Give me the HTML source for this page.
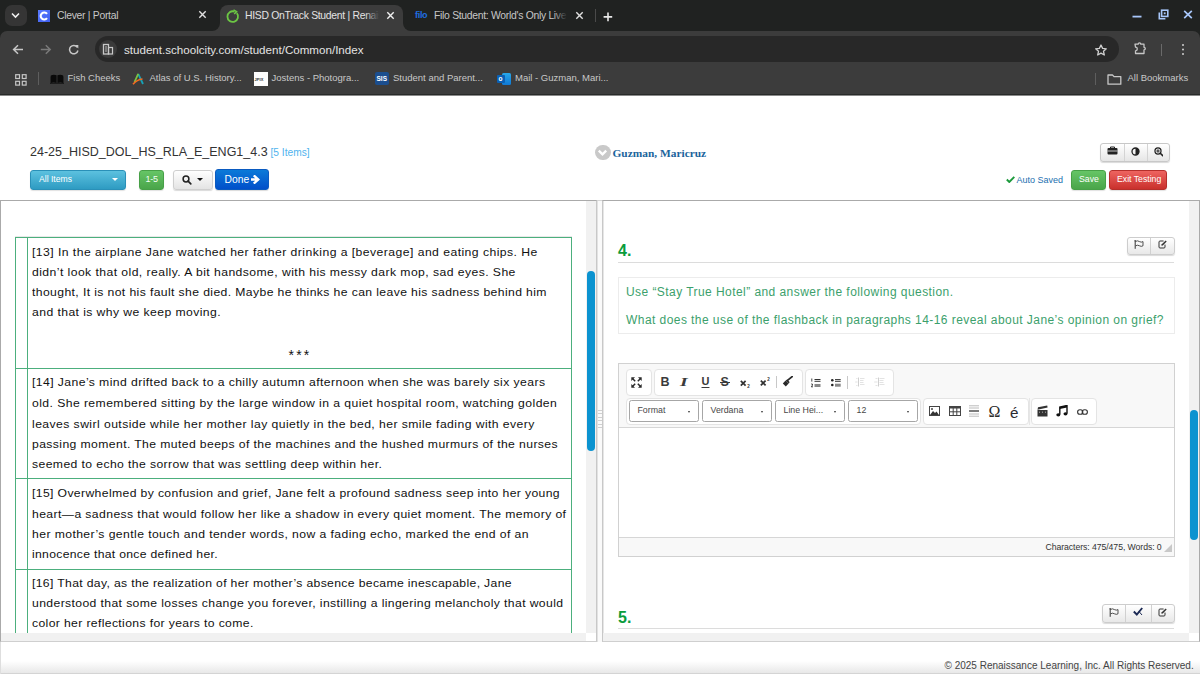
<!DOCTYPE html>
<html><head><meta charset="utf-8">
<style>
*{box-sizing:border-box;margin:0;padding:0}
html,body{width:1200px;height:674px;overflow:hidden;background:#fff;font-family:"Liberation Sans",sans-serif}
.a{position:absolute}
.nw{white-space:nowrap}
#chrome{position:absolute;left:0;top:0;width:1200px;height:96px;background:#202221}
#toolbar{position:absolute;left:0;top:31px;width:1200px;height:63px;background:#3c3c3c;border-radius:7px 7px 0 0}
.tt{position:absolute;font-size:10.4px;color:#c7c7c7;white-space:nowrap;top:10px;letter-spacing:-0.3px}
.bm{position:absolute;font-size:9.5px;color:#c8c8c8;white-space:nowrap;top:72.4px}
.btn{position:absolute;border-radius:3px;color:#fff;font-size:10px;white-space:nowrap;text-align:center}
.grp{position:absolute;background:#fff;border:1px solid #e4e4e4;border-radius:4px}
.combo{position:absolute;background:#fff;border:1px solid #a6a6a6;border-radius:2.5px}
.ptext{position:absolute;transform-origin:0 0;font-size:11.5px;color:#111;white-space:nowrap;left:32px}
</style></head>
<body>
<div id="chrome">
  <div class="a" style="left:5px;top:5px;width:22px;height:21px;border-radius:7px;background:#353535"></div>
  <svg class="a" style="left:11px;top:12px" width="9" height="7" viewBox="0 0 9 7"><path d="M1 1.5 L4.5 5 L8 1.5" fill="none" stroke="#f0f0f0" stroke-width="1.6"/></svg>
  <div class="a" style="left:38px;top:10px;width:12px;height:12px;background:linear-gradient(135deg,#5a7bff,#3f5ff0)"></div>
  <svg class="a" style="left:38px;top:10px" width="12" height="12" viewBox="0 0 12 12"><path d="M9 3.9 A3.5 3.5 0 1 0 9 8.1" fill="none" stroke="#fff" stroke-width="2.1"/></svg>
  <svg class="a" style="left:197.7px;top:10.4px" width="9" height="9" viewBox="0 0 9 9"><path d="M1.3 1.3 L7.7 7.7 M7.7 1.3 L1.3 7.7" stroke="#e0e0e0" stroke-width="1.4"/></svg>
  <!-- active tab -->
  <div class="a" style="left:211px;top:23px;width:10px;height:9px;background:#3c3c3c"></div>
  <div class="a" style="left:211px;top:21px;width:9px;height:10px;background:#202221;border-radius:0 0 8px 0"></div>
  <div class="a" style="left:402px;top:23px;width:10px;height:9px;background:#3c3c3c"></div>
  <div class="a" style="left:403px;top:21px;width:9px;height:10px;background:#202221;border-radius:0 0 0 8px"></div>
  <div class="a" style="left:220px;top:5px;width:183px;height:27px;background:#3c3c3c;border-radius:8px 8px 0 0"></div>
  <svg class="a" style="left:225px;top:9px" width="15" height="15" viewBox="0 0 15 15"><path d="M11.8 4.2 A5.3 5.3 0 1 1 9.5 2.6" fill="none" stroke="#6cc644" stroke-width="1.8"/><path d="M8.5 0.8 L11.6 2.6 L9.2 5" fill="none" stroke="#6cc644" stroke-width="1.5"/></svg>
  <svg class="a" style="left:385.8px;top:10.7px" width="9" height="9" viewBox="0 0 9 9"><path d="M1.3 1.3 L7.7 7.7 M7.7 1.3 L1.3 7.7" stroke="#f0f0f0" stroke-width="1.4"/></svg>
  <div class="a nw" style="left:415px;top:10px;font-size:9px;font-weight:bold;color:#1f6fe0;letter-spacing:-0.3px">f<span style="color:#1f6fe0">i</span>lo</div>
  <svg class="a" style="left:574.7px;top:10.5px" width="9" height="9" viewBox="0 0 9 9"><path d="M1.3 1.3 L7.7 7.7 M7.7 1.3 L1.3 7.7" stroke="#e0e0e0" stroke-width="1.4"/></svg>
  <div class="a" style="left:594.5px;top:9px;width:1.5px;height:12.5px;background:#4a4a4a"></div>
  <svg class="a" style="left:602.5px;top:11.5px" width="10" height="10" viewBox="0 0 10 10"><path d="M5 0.6 V9.2 M0.6 4.9 H9.2" stroke="#e8e8e8" stroke-width="1.6"/></svg>
  <svg class="a" style="left:1132px;top:15px" width="10" height="3" viewBox="0 0 10 3"><path d="M0.5 1.6 H9.5" stroke="#a8c7fa" stroke-width="1.8"/></svg>
  <svg class="a" style="left:1157.5px;top:8.5px" width="11" height="11" viewBox="0 0 11 11"><path d="M1.3 3.6 V9.7 H7.4" fill="none" stroke="#a8c7fa" stroke-width="1.6"/><rect x="3.6" y="1.2" width="6.2" height="6.2" fill="none" stroke="#a8c7fa" stroke-width="1.6"/><rect x="5.8" y="3.4" width="1.8" height="1.8" fill="#a8c7fa"/></svg>
  <svg class="a" style="left:1183px;top:9.5px" width="10" height="9" viewBox="0 0 10 9"><path d="M1.2 0.8 L8.8 8.2 M8.8 0.8 L1.2 8.2" stroke="#a8c7fa" stroke-width="1.7"/></svg>
  <div id="toolbar">
    <div class="a" style="left:95px;top:5px;width:1024px;height:26px;border-radius:13px;background:#282828"></div>
    <div class="a" style="left:99px;top:9px;width:18px;height:18px;border-radius:9px;background:#3a3a3a"></div>
    <svg class="a" style="left:102px;top:12px" width="12" height="12" viewBox="0 0 12 12"><rect x="1.5" y="1.5" width="5" height="9.5" fill="none" stroke="#c8c8c8" stroke-width="1.3"/><rect x="6.5" y="4.5" width="4" height="6.5" fill="none" stroke="#c8c8c8" stroke-width="1.2"/><path d="M3 4 H5 M3 6 H5 M3 8 H5" stroke="#c8c8c8" stroke-width="0.9"/></svg>
    <div id="url" class="a nw" style="left:124px;top:11.5px;font-size:11.6px;color:#e3e3e3">student.schoolcity.com/student/Common/Index</div>
    <svg class="a" style="left:12px;top:12.5px" width="12" height="11" viewBox="0 0 12 11"><path d="M11 5.5 H1.8 M6 1.2 L1.6 5.5 L6 9.8" fill="none" stroke="#c7c7c7" stroke-width="1.5"/></svg>
    <svg class="a" style="left:40px;top:12.5px" width="12" height="11" viewBox="0 0 12 11"><path d="M0.8 5.5 H10 M5.8 1.2 L10.2 5.5 L5.8 9.8" fill="none" stroke="#7a7a7a" stroke-width="1.5"/></svg>
    <svg class="a" style="left:68px;top:12.5px" width="12" height="11" viewBox="0 0 12 11"><path d="M9.3 3.3 A4.2 4.2 0 1 0 9.9 6.5" fill="none" stroke="#c7c7c7" stroke-width="1.5"/><path d="M6.8 1 H10.3 V4.5 Z" fill="#c7c7c7"/></svg>
    <svg class="a" style="left:1094px;top:12.5px" width="14" height="12" viewBox="0 0 14 12"><path d="M7 1 L8.6 4.4 L12.3 4.8 L9.5 7.3 L10.3 11 L7 9.1 L3.7 11 L4.5 7.3 L1.7 4.8 L5.4 4.4 Z" fill="none" stroke="#d0d0d0" stroke-width="1.3" stroke-linejoin="round"/></svg>
    <svg class="a" style="left:1133px;top:10px" width="15" height="15" viewBox="0 0 15 15"><path d="M2 3.2 H5.2 A1.3 1.3 0 0 1 7.8 3.2 H11 V6.3 A1.3 1.3 0 0 1 11 8.9 V12.5 H2.5 V9.8 A1.6 1.6 0 0 0 2.5 6.2 Z" fill="none" stroke="#c7c7c7" stroke-width="1.3" stroke-linejoin="round"/></svg>
    <div class="a" style="left:1160.5px;top:13px;width:1px;height:12px;background:#6a6a6a"></div>
    <div class="a" style="left:1181.5px;top:13px;width:2px;height:2px;border-radius:1px;background:#d0d0d0;box-shadow:0 4.5px 0 #d0d0d0,0 9px 0 #d0d0d0"></div>
    <!-- bookmarks -->
    <svg class="a" style="left:14.5px;top:42.5px" width="12" height="12" viewBox="0 0 12 12"><rect x="0.7" y="0.7" width="3.8" height="3.8" fill="none" stroke="#c7c7c7" stroke-width="1.2"/><rect x="7.3" y="0.7" width="3.8" height="3.8" fill="none" stroke="#c7c7c7" stroke-width="1.2"/><rect x="0.7" y="7.3" width="3.8" height="3.8" fill="none" stroke="#c7c7c7" stroke-width="1.2"/><rect x="7.3" y="7.3" width="3.8" height="3.8" fill="none" stroke="#c7c7c7" stroke-width="1.2"/></svg>
    <div class="a" style="left:38px;top:41px;width:1px;height:13px;background:#5e5e5e"></div>
    <svg class="a" style="left:50px;top:42.5px" width="14" height="10" viewBox="0 0 14 10"><path d="M0.8 1.5 Q3.5 0 6.6 1.2 V9 Q3.5 8 0.8 9 Z M7.4 1.2 Q10.5 0 13.2 1.5 V9 Q10.5 8 7.4 9 Z" fill="#0a0a0a"/><path d="M0 2.5 V9.6 H14 V2.5" fill="none" stroke="#111" stroke-width="0.8"/></svg>
    <svg class="a" style="left:132px;top:42px" width="12" height="12" viewBox="0 0 12 12"><path d="M6.2 0.8 L11 11" stroke="#16a3b8" stroke-width="1.8"/><path d="M6.2 0.8 L2.5 9" stroke="#7cc242" stroke-width="1.8"/><path d="M1 11.2 Q5 6.5 10.5 6" fill="none" stroke="#f26b21" stroke-width="1.6"/></svg>
    <div class="a" style="left:254px;top:41px;width:13.5px;height:13.5px;background:#fdfdfd"></div>
    <div class="a nw" style="left:254.5px;top:45.5px;font-size:4px;color:#333;font-weight:bold;letter-spacing:0.1px">JPIX</div>
    <div class="a" style="left:375px;top:41px;width:13.5px;height:13px;border-radius:2px;background:#1b4e8f"></div>
    <div class="a nw" style="left:376.5px;top:43.5px;font-size:6.5px;color:#fff;font-weight:bold">SIS</div>
    <div class="a" style="left:502px;top:41.5px;width:8.5px;height:12px;border-radius:1.5px;background:linear-gradient(#28a8ea,#0f78d4)"></div>
    <div class="a" style="left:497px;top:43.5px;width:8px;height:8px;border-radius:1px;background:#0a5fb4"></div>
    <div class="a nw" style="left:498.5px;top:44px;font-size:6.5px;color:#fff;font-weight:bold">o</div>
    <div class="a" style="left:1094.5px;top:41.5px;width:1px;height:12px;background:#5e5e5e"></div>
    <svg class="a" style="left:1107px;top:43px" width="15" height="11" viewBox="0 0 15 11"><path d="M1 1 H5.5 L7 2.6 H13.8 V10.2 H1 Z" fill="none" stroke="#c7c7c7" stroke-width="1.3" stroke-linejoin="round"/></svg>
  </div>
  <div class="a" style="left:0;top:94px;width:1200px;height:1px;background:#282a29"></div>
  <div class="a" style="left:0;top:95px;width:1200px;height:1px;background:#8a8a8a"></div>
  <div class="tt" style="left:57px">Clever | Portal</div>
  <div class="tt" style="left:245px;color:#e3e3e3;width:134px;overflow:hidden">HISD OnTrack Student | Renaissance</div>
  <div class="tt" style="left:434px;width:133px;overflow:hidden">Filo Student: World's Only Live Tutoring</div>
  <div class="a" style="left:365px;top:7px;width:15px;height:20px;background:linear-gradient(90deg,rgba(60,60,60,0),#3c3c3c 95%)"></div>
  <div class="a" style="left:553px;top:7px;width:15px;height:20px;background:linear-gradient(90deg,rgba(32,34,33,0),#202221 95%)"></div>
  <div class="bm" style="left:67.5px">Fish Cheeks</div>
  <div class="bm" style="left:149.5px">Atlas of U.S. History...</div>
  <div class="bm" style="left:271.5px">Jostens - Photogra...</div>
  <div class="bm" style="left:393px">Student and Parent...</div>
  <div class="bm" style="left:515px">Mail - Guzman, Mari...</div>
  <div class="bm" style="left:1127.5px">All Bookmarks</div>
</div>

<!-- header -->
<div id="ttl" class="a nw" style="left:30px;top:145px;font-size:12.5px;color:#333">24-25_HISD_DOL_HS_RLA_E_ENG1_4.3</div>
<div id="ttl2" class="a nw" style="left:270.5px;top:147.3px;font-size:10.2px;color:#4fb3ee">[5 Items]</div>
<div class="btn" style="left:30px;top:170px;width:96px;height:20px;background:linear-gradient(#5cc1df,#2e9bc2);border:1px solid #2a90b8;box-shadow:0 1px 1px rgba(0,0,0,.12)"></div>
<div id="allit" class="a nw" style="left:39px;top:174.2px;font-size:8.6px;color:#fff">All Items</div>
<div class="a" style="left:111.5px;top:178px;width:0;height:0;border-left:3px solid transparent;border-right:3px solid transparent;border-top:3px solid #fff"></div>
<div class="btn" style="left:139px;top:170px;width:25px;height:19.5px;background:linear-gradient(#66c566,#4aa54a);border:1px solid #47a047;box-shadow:0 1px 1px rgba(0,0,0,.12)"></div>
<div id="b15" class="a nw" style="left:145.5px;top:174px;font-size:9px;color:#f4fff4;letter-spacing:-0.2px">1-5</div>
<div class="btn" style="left:173px;top:170px;width:40px;height:20px;background:linear-gradient(#fff,#e4e4e4);border:1px solid #cfcfcf;box-shadow:0 1px 1px rgba(0,0,0,.15)"></div>
<svg class="a" style="left:182px;top:174.5px" width="10" height="10" viewBox="0 0 10 10"><circle cx="4" cy="4" r="2.9" fill="none" stroke="#222" stroke-width="1.5"/><path d="M6.1 6.1 L8.8 8.8" stroke="#222" stroke-width="1.7" stroke-linecap="round"/></svg>
<div class="a" style="left:197px;top:178px;width:0;height:0;border-left:3px solid transparent;border-right:3px solid transparent;border-top:3px solid #111"></div>
<div class="btn" style="left:215px;top:169px;width:54px;height:21px;background:linear-gradient(#0b7ad8,#004fca);border:1px solid #0a5ac0;box-shadow:0 1px 1px rgba(0,0,0,.15)"></div>
<div id="done" class="a nw" style="left:224.5px;top:174.3px;font-size:10.3px;color:#fff">Done</div>
<svg class="a" style="left:250.5px;top:175px" width="9" height="9" viewBox="0 0 9 9"><path d="M0.6 4.5 H6.8 M3.6 1.2 L7.3 4.5 L3.6 7.8" fill="none" stroke="#fff" stroke-width="2.3" stroke-linejoin="miter" stroke-linecap="square"/></svg>

<div class="a" style="left:595px;top:144.5px;width:15.5px;height:15.5px;border-radius:8px;background:#c9c9c9"></div>
<svg class="a" style="left:597px;top:147px" width="11" height="11" viewBox="0 0 11 11"><path d="M1.8 3.6 L5.5 7.3 L9.2 3.6" fill="none" stroke="#fff" stroke-width="2.3"/></svg>
<div id="guz" class="a nw" style="left:612.5px;top:146.5px;font-family:'Liberation Serif',serif;font-weight:bold;font-size:11.4px;color:#1b649c">Guzman, Maricruz</div>

<div class="btn" style="left:1100px;top:143px;width:70px;height:19px;background:linear-gradient(#fff,#e6e6e6);border:1px solid #c8c8c8;box-shadow:0 1px 1px rgba(0,0,0,.15)"></div>
<div class="a" style="left:1123.5px;top:144px;width:1px;height:17px;background:#d4d4d4"></div>
<div class="a" style="left:1146.5px;top:144px;width:1px;height:17px;background:#d4d4d4"></div>
<svg class="a" style="left:1107px;top:146px" width="11" height="10" viewBox="0 0 11 10"><path d="M3.5 2 V1 H7.5 V2" fill="none" stroke="#222" stroke-width="1"/><rect x="0.5" y="2" width="10" height="6.5" rx="1" fill="#222"/><rect x="0.5" y="4.6" width="10" height="0.8" fill="#eee"/></svg>
<svg class="a" style="left:1130.5px;top:147px" width="9" height="9" viewBox="0 0 9 9"><circle cx="4.5" cy="4.5" r="3.5" fill="none" stroke="#222" stroke-width="1.3"/><path d="M4.5 1 A3.5 3.5 0 0 1 4.5 8 Z" fill="#222"/></svg>
<svg class="a" style="left:1153.5px;top:147px" width="9.5" height="9.5" viewBox="0 0 10 10"><circle cx="4.2" cy="4.2" r="3.2" fill="none" stroke="#222" stroke-width="1.3"/><path d="M4.2 2.4 V6 M2.4 4.2 H6" stroke="#222" stroke-width="1.1"/><path d="M6.6 6.6 L9.2 9.2" stroke="#222" stroke-width="1.7" stroke-linecap="round"/></svg>

<svg class="a" style="left:1005.5px;top:176px" width="9" height="7" viewBox="0 0 9 7"><path d="M0.8 3.5 L3.3 6 L8.3 0.9" fill="none" stroke="#1c9a3c" stroke-width="1.9"/></svg>
<div id="autos" class="a nw" style="left:1016.5px;top:175px;font-size:9px;color:#2370b0">Auto Saved</div>
<div class="btn" style="left:1071px;top:170px;width:35px;height:19.5px;background:linear-gradient(#66c566,#4aa54a);border:1px solid #47a047;box-shadow:0 1px 1px rgba(0,0,0,.12)"></div>
<div id="save" class="a nw" style="left:1079px;top:173.8px;font-size:8.7px;color:#fff">Save</div>
<div class="btn" style="left:1109px;top:170px;width:58px;height:19.5px;background:linear-gradient(#ee6460,#c9302c);border:1px solid #b52f2b;box-shadow:0 1px 1px rgba(0,0,0,.12)"></div>
<div id="exitt" class="a nw" style="left:1117px;top:174px;font-size:8.7px;color:#fff">Exit Testing</div>

<!-- left panel -->
<div class="a" style="left:0;top:200px;width:597px;height:442px;border:1px solid #aaa;border-right-color:#c8c8c8;border-bottom-color:#cfcfcf"></div>
<div class="a" style="left:15px;top:236px;width:557px;height:1px;background:#e8e8e8"></div>
<div class="a" style="left:586px;top:201px;width:10px;height:432px;background:#f1f1f1"></div>
<div class="a" style="left:587px;top:271px;width:8px;height:180px;border-radius:4px;background:#0b93d0"></div>
<div class="a" style="left:1px;top:633px;width:585px;height:8px;background:#f1f1f1"></div>

<!-- passage table -->
<div class="a" style="left:15px;top:237px;width:557px;height:396px;border:1px solid #4caf7d;border-bottom:none"></div>
<div class="a" style="left:27px;top:237px;width:1px;height:396px;background:#4caf7d"></div>
<div class="a" style="left:15px;top:368px;width:557px;height:1px;background:#4caf7d"></div>
<div class="a" style="left:15px;top:478px;width:557px;height:1px;background:#4caf7d"></div>
<div class="a" style="left:15px;top:569px;width:557px;height:1px;background:#4caf7d"></div>

<div class="ptext" style="transform:scaleX(1.060);letter-spacing:0.421px;top:245.8px">[13] In the airplane Jane watched her father drinking a [beverage] and eating chips. He</div>
<div class="ptext" style="transform:scaleX(1.060);letter-spacing:0.406px;top:266.0px">didn’t look that old, really. A bit handsome, with his messy dark mop, sad eyes. She</div>
<div class="ptext" style="transform:scaleX(1.060);letter-spacing:0.361px;top:286.2px">thought, It is not his fault she died. Maybe he thinks he can leave his sadness behind him</div>
<div class="ptext" style="transform:scaleX(1.060);letter-spacing:0.391px;top:306.3px">and that is why we keep moving.</div>
<div id="ast" class="ptext" style="letter-spacing:2.2px;top:346.5px;left:288.5px;font-size:14px">***</div>
<div class="ptext" style="transform:scaleX(1.060);letter-spacing:0.393px;top:376.0px">[14] Jane’s mind drifted back to a chilly autumn afternoon when she was barely six years</div>
<div class="ptext" style="transform:scaleX(1.060);letter-spacing:0.396px;top:397.2px">old. She remembered sitting by the large window in a quiet hospital room, watching golden</div>
<div class="ptext" style="transform:scaleX(1.060);letter-spacing:0.403px;top:417.5px">leaves swirl outside while her mother lay quietly in the bed, her smile fading with every</div>
<div class="ptext" style="transform:scaleX(1.060);letter-spacing:0.370px;top:437.8px">passing moment. The muted beeps of the machines and the hushed murmurs of the nurses</div>
<div class="ptext" style="transform:scaleX(1.060);letter-spacing:0.371px;top:458.3px">seemed to echo the sorrow that was settling deep within her.</div>
<div class="ptext" style="transform:scaleX(1.060);letter-spacing:0.346px;top:487.3px">[15] Overwhelmed by confusion and grief, Jane felt a profound sadness seep into her young</div>
<div class="ptext" style="transform:scaleX(1.060);letter-spacing:0.378px;top:507.7px">heart—a sadness that would follow her like a shadow in every quiet moment. The memory of</div>
<div class="ptext" style="transform:scaleX(1.060);letter-spacing:0.385px;top:527.9px">her mother’s gentle touch and tender words, now a fading echo, marked the end of an</div>
<div class="ptext" style="transform:scaleX(1.060);letter-spacing:0.284px;top:548.1px">innocence that once defined her.</div>
<div class="ptext" style="transform:scaleX(1.060);letter-spacing:0.324px;top:577.0px">[16] That day, as the realization of her mother’s absence became inescapable, Jane</div>
<div class="ptext" style="transform:scaleX(1.060);letter-spacing:0.356px;top:597.2px">understood that some losses change you forever, instilling a lingering melancholy that would</div>
<div class="ptext" style="transform:scaleX(1.060);letter-spacing:0.338px;top:617.4px">color her reflections for years to come.</div>

<!-- splitter -->
<div class="a" style="left:597px;top:200px;width:5px;height:442px;background:#fafafa"></div>
<div class="a" style="left:598px;top:410px;width:4px;height:21px;background:repeating-linear-gradient(#cfcfcf 0 1px,#fafafa 1px 3.5px)"></div>
<div class="a" style="left:597px;top:201px;width:1px;height:441px;background:#e2e2e2"></div>
<div class="a" style="left:597px;top:200px;width:5px;height:1px;background:#d6d6d6"></div>
<div class="a" style="left:603px;top:201px;width:1px;height:432px;background:#e6e6e6"></div>

<!-- right panel -->
<div class="a" style="left:602px;top:200px;width:598px;height:442px;border:1px solid #aaa;border-left-color:#c8c8c8;border-bottom-color:#cfcfcf"></div>
<div class="a" style="left:1189px;top:201px;width:10px;height:432px;background:#f1f1f1"></div>
<div class="a" style="left:1190px;top:410px;width:7.5px;height:130px;border-radius:4px;background:#0b93d0"></div>
<div class="a" style="left:603px;top:633px;width:586px;height:8px;background:#f1f1f1"></div>

<div class="a nw" style="left:618px;top:241.5px;font-size:16px;font-weight:bold;color:#0b9c3c">4.</div>
<div class="a" style="left:618px;top:262px;width:556px;height:1px;background:#dcdcdc"></div>
<div class="btn" style="left:1126.5px;top:237px;width:48px;height:18px;background:linear-gradient(#fff,#e8e8e8);border:1px solid #cdcdcd;box-shadow:0 1px 1px rgba(0,0,0,.15)"></div>
<div class="a" style="left:1150px;top:238px;width:1px;height:16px;background:#d0d0d0"></div>
<svg class="a" style="left:1134px;top:240px" width="10" height="9" viewBox="0 0 10 9"><path d="M1.2 0.6 V8.8" stroke="#333" stroke-width="1"/><path d="M0.4 0.8 H2" stroke="#333" stroke-width="0.9"/><path d="M1.6 1.4 Q3.5 0.2 5.5 1.6 Q7.3 2.7 9 1.6 V5.8 Q7.3 6.9 5.5 5.8 Q3.5 4.6 1.6 5.8" fill="none" stroke="#333" stroke-width="0.85"/></svg>
<svg class="a" style="left:1158px;top:240px" width="9" height="9" viewBox="0 0 9 9"><path d="M5.6 1 H2 Q1 1 1 2 V7 Q1 8 2 8 H6 Q7 8 7 7 V4.6" fill="none" stroke="#333" stroke-width="1"/><path d="M3.4 5.8 L3.7 4.3 L7.7 0.4 L8.7 1.4 L4.8 5.4 Z" fill="#333"/></svg>

<div class="a" style="left:617.5px;top:277px;width:557px;height:57px;border:1px solid #ececec"></div>
<div id="q1" class="a nw" style="left:626px;top:285px;font-size:12px;color:#3c9f6c;letter-spacing:0.44px">Use “Stay True Hotel” and answer the following question.</div>
<div id="q2" class="a nw" style="left:626px;top:313px;font-size:12px;color:#3c9f6c;letter-spacing:0.44px">What does the use of the flashback in paragraphs 14-16 reveal about Jane’s opinion on grief?</div>

<!-- editor -->
<div class="a" style="left:618px;top:363px;width:557px;height:194px;border:1px solid #d1d1d1;background:#f8f8f8"></div>
<div class="a" style="left:619px;top:427px;width:555px;height:111px;background:#fff;border-top:1px solid #d6d6d6;border-bottom:1px solid #d6d6d6"></div>
<div class="grp" style="left:626px;top:369px;width:25.5px;height:26.5px"></div>
<div class="grp" style="left:654px;top:369px;width:149px;height:26.5px"></div>
<div class="grp" style="left:805px;top:369px;width:88.5px;height:26.5px"></div>
<div class="grp" style="left:626px;top:398px;width:294.5px;height:26.5px"></div>
<div class="grp" style="left:923px;top:398px;width:105.5px;height:26.5px"></div>
<div class="grp" style="left:1031px;top:398px;width:65.5px;height:26.5px"></div>
<!-- row1 icons -->
<svg class="a" style="left:631px;top:377px" width="11" height="11" viewBox="0 0 11 11"><g fill="#2a2a2a"><path d="M0.3 0.3 H4 L0.3 4 Z"/><path d="M10.7 0.3 H7 L10.7 4 Z"/><path d="M0.3 10.7 H4 L0.3 7 Z"/><path d="M10.7 10.7 H7 L10.7 7 Z"/></g><path d="M1.5 1.5 L4.2 4.2 M9.5 1.5 L6.8 4.2 M1.5 9.5 L4.2 6.8 M9.5 9.5 L6.8 6.8" stroke="#2a2a2a" stroke-width="1.5"/></svg>
<div class="a nw" style="left:660.5px;top:374.5px;font-size:12.5px;font-weight:bold;color:#3a3a3a">B</div>
<div class="a nw" style="left:680px;top:374px;font-size:13px;font-style:italic;font-family:'Liberation Serif',serif;font-weight:bold;color:#3a3a3a;transform:scaleX(1.5);transform-origin:0 0">I</div>
<div class="a nw" style="left:701.5px;top:375px;font-size:11px;font-weight:bold;color:#3a3a3a;text-decoration:underline;text-underline-offset:1.5px">U</div>
<div class="a nw" style="left:720.5px;top:374.5px;font-size:12.5px;font-weight:bold;color:#3a3a3a">S</div>
<div class="a" style="left:719.5px;top:381.5px;width:10px;height:1.2px;background:#3a3a3a"></div>
<svg class="a" style="left:740px;top:380px" width="11" height="8" viewBox="0 0 11 8"><path d="M0.8 0.8 L5.6 5.6 M5.6 0.8 L0.8 5.6" stroke="#333" stroke-width="1.7"/><text x="7.3" y="7.8" font-size="4.5" font-family="Liberation Sans" font-weight="bold" fill="#333">2</text></svg>
<svg class="a" style="left:760px;top:377px" width="11" height="9" viewBox="0 0 11 9"><path d="M0.8 3.6 L5.6 8.4 M5.6 3.6 L0.8 8.4" stroke="#333" stroke-width="1.7"/><text x="7.3" y="4.2" font-size="4.5" font-family="Liberation Sans" font-weight="bold" fill="#333">2</text></svg>
<div class="a" style="left:776px;top:376px;width:1px;height:12px;background:#c8c8c8"></div>
<svg class="a" style="left:781.5px;top:376px" width="11" height="11" viewBox="0 0 11 11"><path d="M5.2 4.6 L10.2 0.6" stroke="#2a2a2a" stroke-width="1.8" stroke-linecap="round"/><path d="M0.8 7.4 L3.6 4.6 L6.6 7.6 L3.8 10.4 Z" fill="#2a2a2a"/><path d="M3.8 4.4 L5.2 3.6 L7.6 6 L6.8 7.4 Z" fill="#2a2a2a"/></svg>
<svg class="a" style="left:811px;top:377.5px" width="10" height="10" viewBox="0 0 10 10"><path d="M3.5 1.5 H9.5 M3.5 3.3 H9.5" stroke="#333" stroke-width="1"/><rect x="3.5" y="6" width="6" height="3" fill="#888"/><path d="M0.8 0.5 V3.6 M0.2 6 Q1.8 5.5 1.6 7 L0.2 8.8 H2" fill="none" stroke="#333" stroke-width="0.9"/></svg>
<svg class="a" style="left:831px;top:378px" width="10" height="9" viewBox="0 0 10 9"><circle cx="1.3" cy="2.3" r="1.3" fill="#222"/><circle cx="1.3" cy="7" r="1.3" fill="#222"/><path d="M4 1.6 H9.7 M4 3.3 H9.7" stroke="#333" stroke-width="1"/><rect x="4" y="5.7" width="5.7" height="3" fill="#888"/></svg>
<div class="a" style="left:847px;top:376px;width:1px;height:12.5px;background:#c8c8c8"></div>
<svg class="a" style="left:855px;top:377px" width="10" height="10" viewBox="0 0 10 10"><path d="M3.5 0.5 V9.5" stroke="#cfcfcf" stroke-width="1"/><path d="M5 1.5 H9.5 M5 3.5 H8.5 M5 5.5 H8.5 M5 7.5 H9.5 M0.2 5 H2.5 M1.2 1.5 H2.5 M1.2 8.5 H2.5" stroke="#dcdcdc" stroke-width="0.8"/></svg>
<svg class="a" style="left:874px;top:377px" width="11" height="10" viewBox="0 0 11 10"><path d="M4.5 0.5 V9.5" stroke="#cfcfcf" stroke-width="1"/><path d="M5.5 1.5 H10.5 M5.5 3.5 H9.5 M5.5 5.5 H9.5 M5.5 7.5 H10.5 M0.2 5 H3.5 M1.5 1.5 H3.5 M1.5 8.5 H3.5" stroke="#dcdcdc" stroke-width="0.8"/></svg>
<!-- combos -->
<div class="combo" style="left:629px;top:400px;width:70px;height:21.5px"></div>
<div class="combo" style="left:702px;top:400px;width:70px;height:21.5px"></div>
<div class="combo" style="left:775px;top:400px;width:70px;height:21.5px"></div>
<div class="combo" style="left:848px;top:400px;width:70px;height:21.5px"></div>
<div id="cf1" class="a nw" style="left:637.5px;top:404.5px;font-size:8.8px;color:#484848">Format</div>
<div id="cf2" class="a nw" style="left:710.5px;top:404.5px;font-size:8.8px;color:#484848">Verdana</div>
<div id="cf3" class="a nw" style="left:783.5px;top:404.5px;font-size:8.8px;color:#484848">Line Hei...</div>
<div id="cf4" class="a nw" style="left:856.5px;top:404.5px;font-size:8.8px;color:#484848">12</div>
<div class="a" style="left:688px;top:410.5px;width:0;height:0;border-left:1.5px solid transparent;border-right:1.5px solid transparent;border-top:2px solid #333"></div>
<div class="a" style="left:761px;top:410.5px;width:0;height:0;border-left:1.5px solid transparent;border-right:1.5px solid transparent;border-top:2px solid #333"></div>
<div class="a" style="left:834px;top:410.5px;width:0;height:0;border-left:1.5px solid transparent;border-right:1.5px solid transparent;border-top:2px solid #333"></div>
<div class="a" style="left:907px;top:410.5px;width:0;height:0;border-left:1.5px solid transparent;border-right:1.5px solid transparent;border-top:2px solid #333"></div>
<!-- row2 icons -->
<svg class="a" style="left:929px;top:406px" width="11" height="10" viewBox="0 0 11 10"><rect x="0.5" y="0.5" width="10" height="9" fill="none" stroke="#444" stroke-width="1"/><path d="M1 9 L4 5 L6 7 L7.5 5.5 L10 9 Z" fill="#333"/><circle cx="3" cy="3" r="1" fill="#444"/></svg>
<svg class="a" style="left:948.5px;top:406px" width="12" height="10" viewBox="0 0 12 10"><rect x="0.5" y="0.5" width="11" height="9" fill="none" stroke="#444" stroke-width="1"/><rect x="0.5" y="0.5" width="11" height="2" fill="#444"/><path d="M4.2 2 V9.5 M7.8 2 V9.5 M0.5 5.8 H11.5" stroke="#444" stroke-width="1"/></svg>
<svg class="a" style="left:969px;top:405px" width="10" height="12" viewBox="0 0 10 12"><path d="M0 0.8 H10 M0 3 H10 M0 9 H10 M0 11.2 H10" stroke="#bbb" stroke-width="1"/><path d="M0 6 H10" stroke="#444" stroke-width="1.4"/></svg>
<div id="omg" class="a nw" style="left:988.5px;top:403px;font-size:16px;font-family:'Liberation Serif',serif;color:#2a2a2a">Ω</div>
<div id="eac" class="a nw" style="left:1009.5px;top:404.5px;font-size:14.5px;color:#2a2a30;transform:scaleX(1.05);transform-origin:0 0">é</div>
<div class="a" style="left:1029px;top:398px;width:1px;height:27px;background:#e6e6e6"></div>
<svg class="a" style="left:1036.5px;top:405px" width="11" height="12" viewBox="0 0 11 12"><rect x="0.5" y="5" width="10" height="6.5" fill="#333"/><path d="M0.5 4.8 L1 2.2 L10.2 0.4 L10.6 2.6 Z" fill="#333"/><path d="M2.5 6.5 V8 M5.5 6.5 V8 M8.5 6.5 V8" stroke="#888" stroke-width="1"/></svg>
<svg class="a" style="left:1055.5px;top:405px" width="12" height="12" viewBox="0 0 12 12"><path d="M3.8 9.5 V2 L11 0.5 V8.5" fill="none" stroke="#111" stroke-width="1.4"/><path d="M3.8 2 L11 0.5 V2.5 L3.8 4 Z" fill="#111"/><ellipse cx="2.3" cy="9.8" rx="2" ry="1.6" fill="#111"/><ellipse cx="9.5" cy="8.8" rx="2" ry="1.6" fill="#111"/></svg>
<svg class="a" style="left:1076.5px;top:408.5px" width="11" height="6" viewBox="0 0 11 6"><rect x="0.6" y="0.7" width="5.2" height="4.6" rx="2.3" fill="none" stroke="#333" stroke-width="1.1"/><rect x="5.2" y="0.7" width="5.2" height="4.6" rx="2.3" fill="none" stroke="#333" stroke-width="1.1"/></svg>

<div id="chars" class="a nw" style="left:1045.5px;top:542px;font-size:8.7px;letter-spacing:-0.07px;color:#333">Characters: 475/475, Words: 0</div>
<svg class="a" style="left:1164px;top:544px" width="8" height="8" viewBox="0 0 8 8"><path d="M8 0 V8 H0 Z" fill="#c8c8c8"/></svg>

<div class="a nw" style="left:618px;top:609px;font-size:16px;font-weight:bold;color:#0b9c3c">5.</div>
<div class="a" style="left:618px;top:628px;width:556px;height:1px;background:#dcdcdc"></div>
<div class="btn" style="left:1101.5px;top:604px;width:73px;height:18.5px;background:linear-gradient(#fff,#e8e8e8);border:1px solid #cdcdcd;box-shadow:0 1px 1px rgba(0,0,0,.15)"></div>
<div class="a" style="left:1124.5px;top:605px;width:1px;height:17px;background:#d0d0d0"></div>
<div class="a" style="left:1150.5px;top:605px;width:1px;height:17px;background:#d0d0d0"></div>
<svg class="a" style="left:1109px;top:607.5px" width="10" height="9" viewBox="0 0 10 9"><path d="M1.2 0.6 V8.8" stroke="#333" stroke-width="1"/><path d="M0.4 0.8 H2" stroke="#333" stroke-width="0.9"/><path d="M1.6 1.4 Q3.5 0.2 5.5 1.6 Q7.3 2.7 9 1.6 V5.8 Q7.3 6.9 5.5 5.8 Q3.5 4.6 1.6 5.8" fill="none" stroke="#333" stroke-width="0.85"/></svg>
<svg class="a" style="left:1133px;top:607px" width="10" height="9" viewBox="0 0 10 9"><path d="M0.8 4.5 L3.8 7.5 L9.2 1" fill="none" stroke="#1c2a55" stroke-width="1.9"/><path d="M6 4.5 L9 8" stroke="#1c2a55" stroke-width="1"/></svg>
<svg class="a" style="left:1158px;top:607.5px" width="9" height="9" viewBox="0 0 9 9"><path d="M5.6 1 H2 Q1 1 1 2 V7 Q1 8 2 8 H6 Q7 8 7 7 V4.6" fill="none" stroke="#333" stroke-width="1"/><path d="M3.4 5.8 L3.7 4.3 L7.7 0.4 L8.7 1.4 L4.8 5.4 Z" fill="#333"/></svg>

<!-- footer -->
<div class="a" style="left:0;top:661px;width:1200px;height:13px;background:linear-gradient(#fff,#e6e6e6)"></div>
<div class="a" style="left:0;top:673px;width:1200px;height:1px;background:#d4d4d4"></div>
<div class="a" style="left:0;top:642px;width:1px;height:32px;background:#dedede"></div>
<div id="foot" class="a nw" style="left:944.5px;top:659.7px;font-size:10px;color:#444">© 2025 Renaissance Learning, Inc. All Rights Reserved.</div>
</body></html>
